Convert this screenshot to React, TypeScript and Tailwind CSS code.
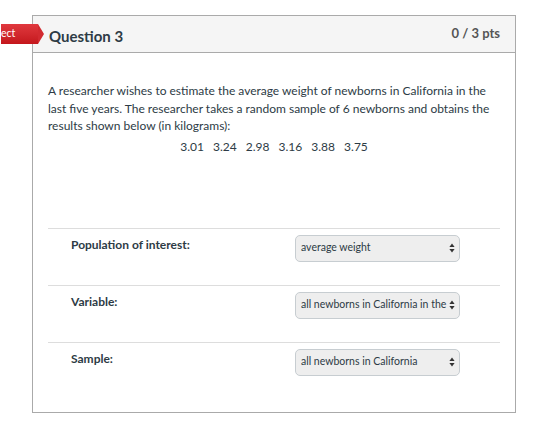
import React from 'react';

const rows = [
  { label: 'Population of interest:', value: 'average weight' },
  { label: 'Variable:', value: 'all newborns in California in the last five years' },
  { label: 'Sample:', value: 'all newborns in California' },
];

const Arrows = () => (
  <svg width="6" height="10" viewBox="0 0 6 10" className="shrink-0">
    <path d="M3 0.5 L5.6 4 H0.4 Z" fill="#333" />
    <path d="M3 9.5 L5.6 6 H0.4 Z" fill="#333" />
  </svg>
);

export default function App() {
  return (
    <div className="min-h-screen bg-white pt-[15px] font-['Lato',sans-serif] text-[#2d3b45]">
      <div className="relative ml-[32px] w-[484px] border border-[#aaaaaa]">
        {/* incorrect tag */}
        <div className="absolute left-[-32px] top-[8px] flex h-[20px] items-center">
          <div className="flex h-full w-[37px] items-center bg-gradient-to-b from-[#e0383e] to-[#c4161c] text-[10.5px] text-white">
            ect
          </div>
          <div className="h-0 w-0 border-y-[10px] border-l-[6px] border-y-transparent border-l-[#d22a30]" />
        </div>

        {/* header */}
        <div className="flex h-[37px] items-start justify-between border-b border-[#aaaaaa] bg-[#f5f5f5] pl-[16px] pr-[15px]">
          <h2 className="pt-[10px] text-[15px] font-bold leading-[20px] text-[#2d3b45]">Question 3</h2>
          <div className="pt-[9px] text-[13px] font-bold leading-[16px] text-[#555555]">0 / 3 pts</div>
        </div>

        {/* body */}
        <div className="px-[15px] pb-[22px] pt-[29px]">
          <p className="text-[12px] leading-[17.5px]">
            A researcher wishes to estimate the average weight of newborns in California in the last five years. The researcher takes a random sample of 6 newborns and obtains the results shown below (in kilograms):
          </p>
          <p className="mt-[3px] text-center text-[12px] leading-[18px] [word-spacing:6px]">
            3.01 3.24 2.98 3.16 3.88 3.75
          </p>

          <div className="mt-[72px]">
            {rows.map((r) => (
              <div key={r.label} className="flex h-[57px] border-t border-[#dddddd] last:h-[48px]">
                <div className="w-[247px] pl-[23px] pt-[8px] text-[12px] font-bold leading-[16px] text-[#2d3b45]">
                  {r.label}
                </div>
                <div className="mt-[6px] flex h-[27px] w-[165px] items-center gap-[1px] overflow-hidden rounded-[5px] border border-[#c7cdd1] bg-[#eeeeee] pl-[5px] pr-[4px]">
                  <span className="flex-1 overflow-hidden whitespace-nowrap text-[10.5px] text-[#2d3b45]">{r.value}</span>
                  <Arrows />
                </div>
              </div>
            ))}
          </div>
        </div>
      </div>
    </div>
  );
}
